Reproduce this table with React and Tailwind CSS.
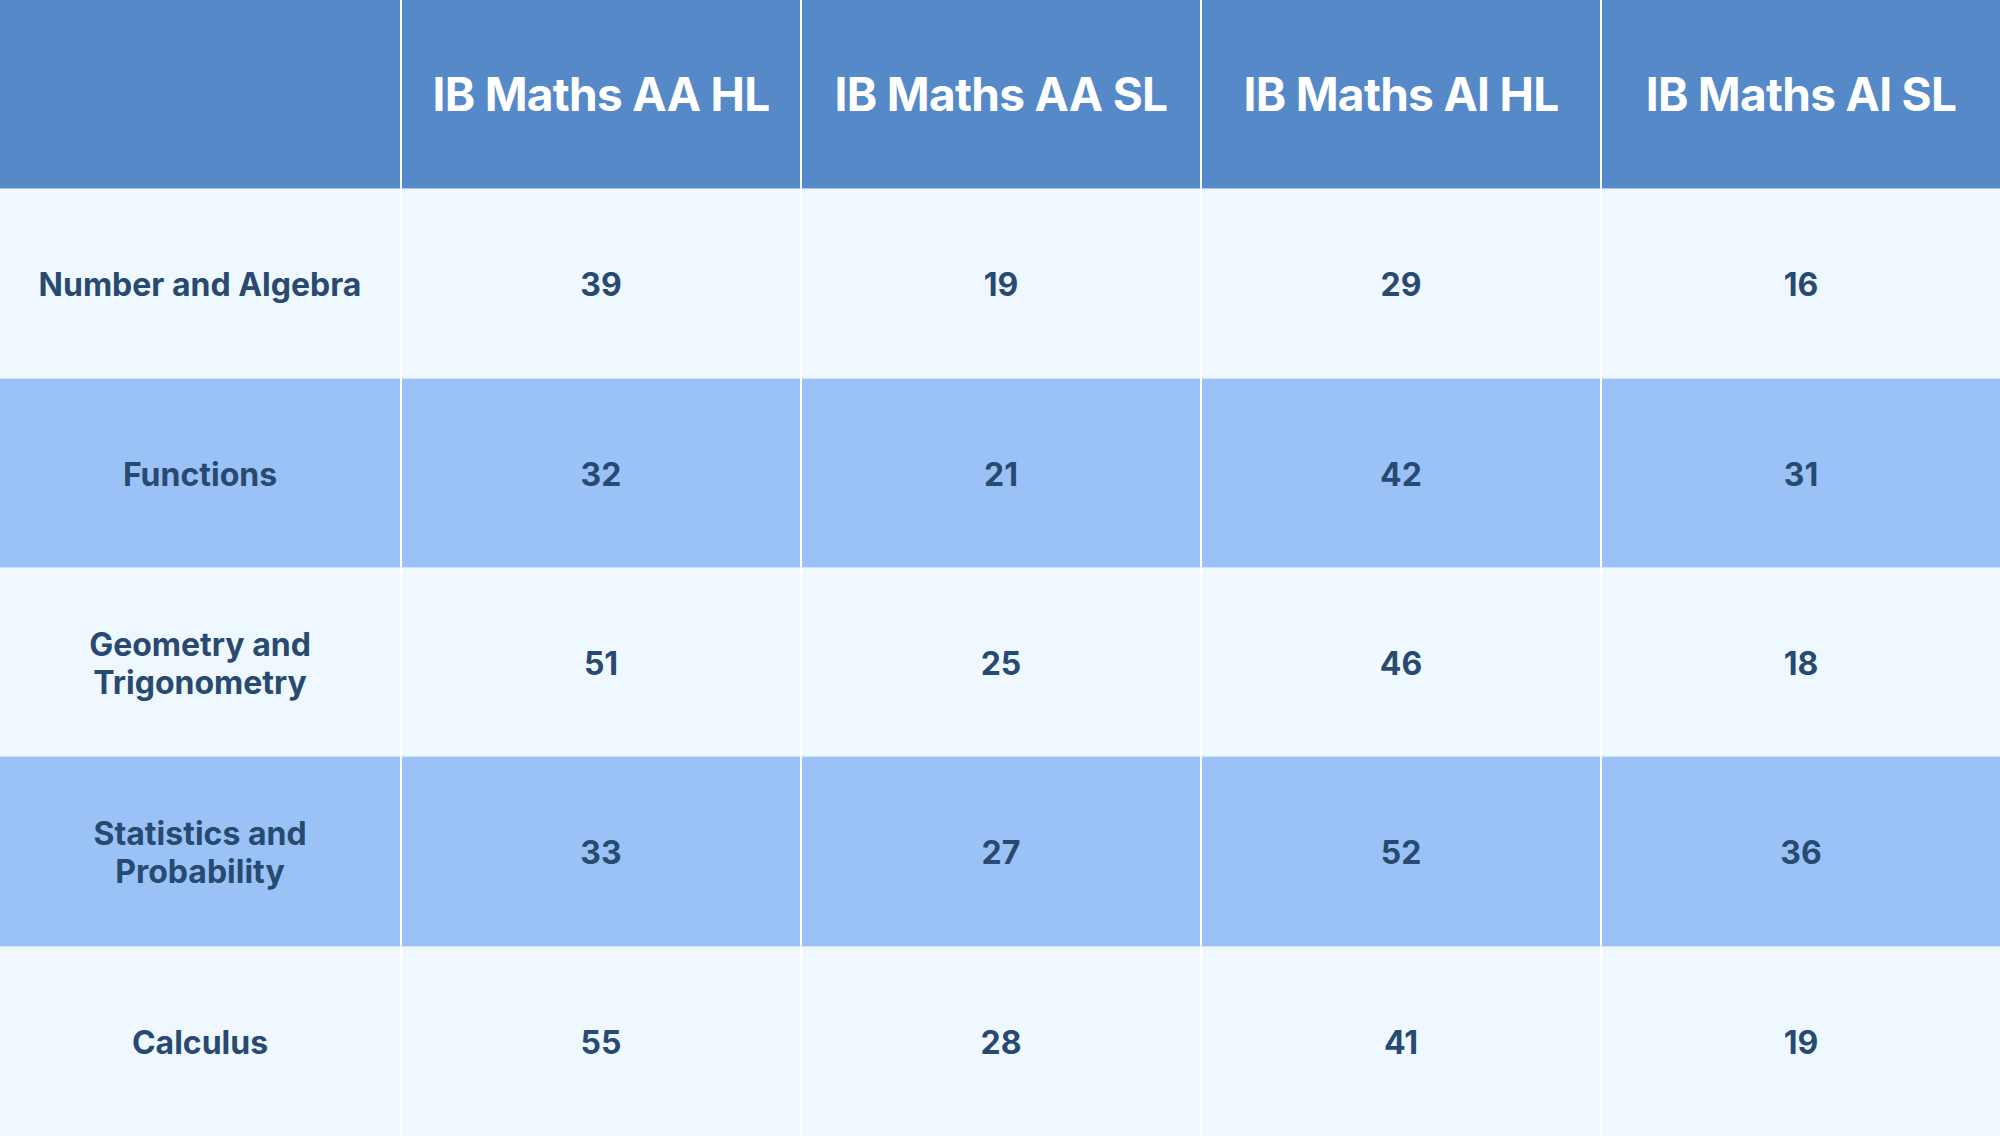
import React from 'react';

const courses = ['IB Maths AA HL', 'IB Maths AA SL', 'IB Maths AI HL', 'IB Maths AI SL'];

const rows = [
    { topic: 'Number and Algebra', values: [39, 19, 29, 16] },
    { topic: 'Functions', values: [32, 21, 42, 31] },
    { topic: 'Geometry and Trigonometry', values: [51, 25, 46, 18] },
    { topic: 'Statistics and Probability', values: [33, 27, 52, 36] },
    { topic: 'Calculus', values: [55, 28, 41, 19] },
];

export default function App() {
    return (
        <div
            className="w-[2000px] h-[1136px] grid grid-cols-5 grid-rows-6 bg-[#f0f8ff]"
            style={{ fontFamily: 'Inter, "Noto Sans", sans-serif' }}
        >
            {/* Header */}
            <div className="bg-[#5589c8] border-b border-[#a9c6ec]" />
            {courses.map((c) => (
                <div
                    key={c}
                    className="bg-[#5589c8] border-l-2 border-white border-b border-b-[#a9c6ec] flex items-center justify-center text-white text-[46px] font-bold tracking-[-0.015em]"
                >
                    {c}
                </div>
            ))}

            {rows.map((row, i) => {
                const bg = i % 2 === 1 ? 'bg-[#9bc2f7]' : 'bg-[#f0f8ff]';
                const last = i === rows.length - 1;
                return (
                    <React.Fragment key={row.topic}>
                        <div
                            className={`${bg} ${last ? '' : 'border-b border-[#d3e4fa]'} flex items-center justify-center text-center px-[30px] pt-[4px] text-[32px] leading-[1.2] font-bold text-[#284a71]`}
                        >
                            {row.topic}
                        </div>
                        {row.values.map((v, j) => (
                            <div
                                key={j}
                                className={`${bg} border-l-2 border-l-white ${last ? '' : 'border-b border-b-[#d3e4fa]'} flex items-center justify-center pt-[4px] text-[32px] font-bold text-[#284a71]`}
                            >
                                {v}
                            </div>
                        ))}
                    </React.Fragment>
                );
            })}
        </div>
    );
}
